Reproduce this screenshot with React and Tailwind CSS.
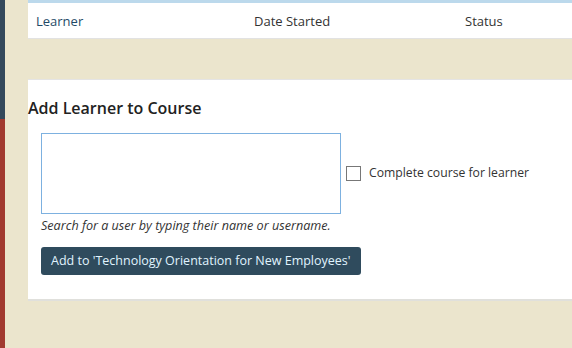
export default function App() {
  return (
    <div
      className="flex w-[572px] h-[348px] overflow-hidden bg-[#ebe5cd]"
      style={{ fontFamily: '"Open Sans", "Noto Sans", sans-serif' }}
    >
      <div className="flex flex-col w-[5px] shrink-0">
        <div className="h-[119px] bg-[#34495c]" />
        <div className="flex-1 bg-[#a13a30]" />
      </div>
      <div className="flex-1 flex flex-col pl-[23px]">
        <div className="h-[3px] bg-[#bcd9ec]" />
        <div className="h-[36px] bg-white border-b border-[#e2e2e2] flex items-center pt-[3px] text-[13px] text-[#333]">
          <span className="w-[226px] pl-[8px] text-[#1f4a67]">Learner</span>
          <span className="w-[211px]">Date Started</span>
          <span>Status</span>
        </div>
        <div className="h-[40px]" />
        <div className="bg-white border-t border-[#e4e4e4] border-b-2 border-b-[#e0e0dc] h-[222px] pt-[17px]">
          <h2 className="text-[16px] font-semibold text-[#222] leading-[22px]">Add Learner to Course</h2>
          <div className="pl-[13px] mt-[14px]">
            <div className="flex items-center">
              <div className="w-[300px] h-[81px] border border-[#7db1e0] bg-white" />
              <div className="w-[15px] h-[15px] border border-[#777] ml-[5px] bg-white" />
              <span className="ml-[8px] text-[12.2px] text-[#333]">Complete course for learner</span>
            </div>
            <p className="italic text-[12.6px] text-[#333] mt-[3px] leading-[18px]">
              Search for a user by typing their name or username.
            </p>
            <button className="mt-[12px] h-[28px] px-[10px] rounded-[3px] bg-[#2f4b5d] text-[#e0f4ff] text-[12.5px]">
              Add to 'Technology Orientation for New Employees'
            </button>
          </div>
        </div>
      </div>
    </div>
  );
}
